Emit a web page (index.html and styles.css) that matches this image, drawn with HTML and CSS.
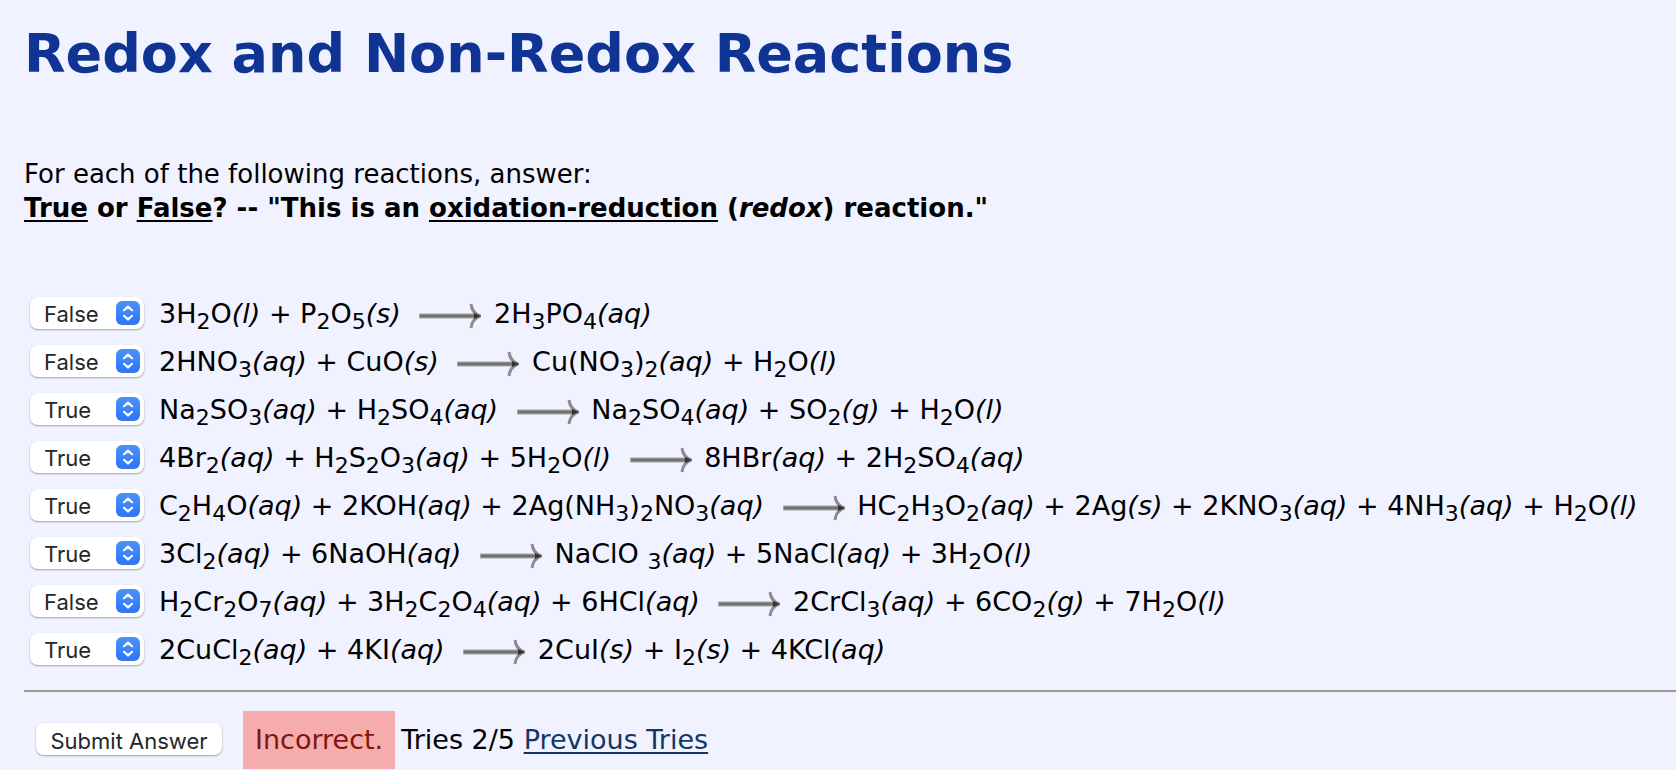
FILE: index.html
```html
<!DOCTYPE html>
<html lang="en">
<head>
  <meta charset="UTF-8" />
  <meta name="viewport" content="width=device-width, initial-scale=1.0"/>
  <title>Redox and Non-Redox Reactions</title>
  <link rel="stylesheet" href="styles.css">
</head>
<body>
  <!-- Shared icons -->
  <svg class="icon-defs" aria-hidden="true">
    <symbol id="updown" viewBox="0 0 24 24">
      <path d="M8 9.2 12 5.6 16 9.2M8 14.8 12 18.4 16 14.8" fill="none" stroke="#fff" stroke-width="2.2" stroke-linecap="round" stroke-linejoin="round"/>
    </symbol>
    <symbol id="yields" viewBox="0 0 62 26">
      <path d="M0 13H58" fill="none" stroke="#aaa" stroke-width="5"/>
      <path d="M1 13H58" fill="none" stroke="#727272" stroke-width="3"/>
      <path d="M52 1Q53 10 61 13Q53 16 52 25" fill="none" stroke="#8c8c8c" stroke-width="3"/>
      <path d="M55 10 62 13 55 16Z" fill="#333"/>
    </symbol>
  </svg>

  <h1>Redox and Non-Redox Reactions</h1>

  <form>
    <p class="question">
      For each of the following reactions, answer:<br>
      <b><u>True</u> or <u>False</u>? -- "This is an <u>oxidation-reduction</u> (<i>redox</i>) reaction."</b>
    </p>

    <!-- Reactions -->
    <div class="reactions">
      <div class="reaction">
        <span class="picker">
          <select id="r1"><option>True</option><option selected>False</option></select>
          <svg><use href="#updown"/></svg>
        </span>
        <label for="r1">3H<sub>2</sub>O<i>(l)</i> + P<sub>2</sub>O<sub>5</sub><i>(s)</i> <svg class="arrow"><use href="#yields"/></svg> 2H<sub>3</sub>PO<sub>4</sub><i>(aq)</i></label>
      </div>
      <div class="reaction">
        <span class="picker">
          <select id="r2"><option>True</option><option selected>False</option></select>
          <svg><use href="#updown"/></svg>
        </span>
        <label for="r2">2HNO<sub>3</sub><i>(aq)</i> + CuO<i>(s)</i> <svg class="arrow"><use href="#yields"/></svg> Cu(NO<sub>3</sub>)<sub>2</sub><i>(aq)</i> + H<sub>2</sub>O<i>(l)</i></label>
      </div>
      <div class="reaction">
        <span class="picker">
          <select id="r3"><option selected>True</option><option>False</option></select>
          <svg><use href="#updown"/></svg>
        </span>
        <label for="r3">Na<sub>2</sub>SO<sub>3</sub><i>(aq)</i> + H<sub>2</sub>SO<sub>4</sub><i>(aq)</i> <svg class="arrow"><use href="#yields"/></svg> Na<sub>2</sub>SO<sub>4</sub><i>(aq)</i> + SO<sub>2</sub><i>(g)</i> + H<sub>2</sub>O<i>(l)</i></label>
      </div>
      <div class="reaction">
        <span class="picker">
          <select id="r4"><option selected>True</option><option>False</option></select>
          <svg><use href="#updown"/></svg>
        </span>
        <label for="r4">4Br<sub>2</sub><i>(aq)</i> + H<sub>2</sub>S<sub>2</sub>O<sub>3</sub><i>(aq)</i> + 5H<sub>2</sub>O<i>(l)</i> <svg class="arrow"><use href="#yields"/></svg> 8HBr<i>(aq)</i> + 2H<sub>2</sub>SO<sub>4</sub><i>(aq)</i></label>
      </div>
      <div class="reaction">
        <span class="picker">
          <select id="r5"><option selected>True</option><option>False</option></select>
          <svg><use href="#updown"/></svg>
        </span>
        <label for="r5">C<sub>2</sub>H<sub>4</sub>O<i>(aq)</i> + 2KOH<i>(aq)</i> + 2Ag(NH<sub>3</sub>)<sub>2</sub>NO<sub>3</sub><i>(aq)</i> <svg class="arrow"><use href="#yields"/></svg> HC<sub>2</sub>H<sub>3</sub>O<sub>2</sub><i>(aq)</i> + 2Ag<i>(s)</i> + 2KNO<sub>3</sub><i>(aq)</i> + 4NH<sub>3</sub><i>(aq)</i> + H<sub>2</sub>O<i>(l)</i></label>
      </div>
      <div class="reaction">
        <span class="picker">
          <select id="r6"><option selected>True</option><option>False</option></select>
          <svg><use href="#updown"/></svg>
        </span>
        <label for="r6">3Cl<sub>2</sub><i>(aq)</i> + 6NaOH<i>(aq)</i> <svg class="arrow"><use href="#yields"/></svg> NaClO <sub>3</sub><i>(aq)</i> + 5NaCl<i>(aq)</i> + 3H<sub>2</sub>O<i>(l)</i></label>
      </div>
      <div class="reaction">
        <span class="picker">
          <select id="r7"><option>True</option><option selected>False</option></select>
          <svg><use href="#updown"/></svg>
        </span>
        <label for="r7">H<sub>2</sub>Cr<sub>2</sub>O<sub>7</sub><i>(aq)</i> + 3H<sub>2</sub>C<sub>2</sub>O<sub>4</sub><i>(aq)</i> + 6HCl<i>(aq)</i> <svg class="arrow"><use href="#yields"/></svg> 2CrCl<sub>3</sub><i>(aq)</i> + 6CO<sub>2</sub><i>(g)</i> + 7H<sub>2</sub>O<i>(l)</i></label>
      </div>
      <div class="reaction">
        <span class="picker">
          <select id="r8"><option selected>True</option><option>False</option></select>
          <svg><use href="#updown"/></svg>
        </span>
        <label for="r8">2CuCl<sub>2</sub><i>(aq)</i> + 4KI<i>(aq)</i> <svg class="arrow"><use href="#yields"/></svg> 2CuI<i>(s)</i> + I<sub>2</sub><i>(s)</i> + 4KCl<i>(aq)</i></label>
      </div>
    </div>

    <hr>

    <!-- Submit row -->
    <div class="submit-row">
      <button type="button">Submit Answer</button>
      <span class="incorrect">Incorrect.</span>
      <span class="tries">Tries 2/5 <a href="#">Previous Tries</a></span>
    </div>
  </form>
</body>
</html>
```

FILE: styles.css
```css
* {
  box-sizing: border-box;
}

body {
  margin: 0;
  padding: 21px 0 0 24px;
  background-color: #f0f2ff;
  color: #000;
  font-family: Verdana, "DejaVu Sans", sans-serif;
  font-size: 27px;
  line-height: 34px;
}

.icon-defs {
  display: none;
}

h1 {
  margin: 0;
  color: #103494;
  font-size: 54px;
  line-height: 66px;
}

.question {
  margin: 70px 0 0;
  font-size: 26px;
}

.question u {
  text-decoration-thickness: 2px;
  text-underline-offset: 3px;
}

/* Reactions */
.reactions {
  margin-top: 65px;
}

.reaction {
  display: flex;
  align-items: center;
  gap: 15px;
  height: 48px;
  padding-left: 6px;
  white-space: nowrap;
}

.reaction sub {
  font-size: 22px;
  line-height: 0;
  vertical-align: -6px;
}

.picker {
  position: relative;
  flex: none;
  width: 114px;
  height: 32px;
  margin-bottom: 2px;
}

.picker select,
button {
  height: 32px;
  border: 0;
  border-radius: 8px;
  background: #fff;
  box-shadow: 0 1px 2px rgba(0, 0, 0, 0.35);
  color: #262626;
  font-family: Inter, sans-serif;
  font-size: 22px;
}

.picker select {
  appearance: none;
  display: block;
  width: 100%;
  padding: 2px 30px 0 14px;
}

/* Blue arrows badge on the select */
.picker svg {
  position: absolute;
  top: 4px;
  right: 4px;
  width: 24px;
  height: 24px;
  border-radius: 6px;
  background: linear-gradient(#4a94fa, #2f74f6);
  pointer-events: none;
}

.arrow {
  width: 62px;
  height: 26px;
  margin: 0 4px 0 10px;
  vertical-align: -6px;
}

hr {
  height: 3px;
  margin: 16px 0 0;
  border: 0;
  border-top: 2px solid #999;
  border-bottom: 1px solid #eee;
}

/* Submit row */
.submit-row {
  display: flex;
  align-items: center;
  margin-top: 18px;
  padding-left: 12px;
}

button {
  width: 186px;
  margin: 0 0 2px;
  padding: 3px 0 0;
  white-space: nowrap;
}

.incorrect {
  margin: 0 6px 0 21px;
  padding: 12px;
  background: #f4acac;
  color: #821410;
}

a {
  color: #123766;
  text-decoration-thickness: 2px;
  text-underline-offset: 3px;
}
```
